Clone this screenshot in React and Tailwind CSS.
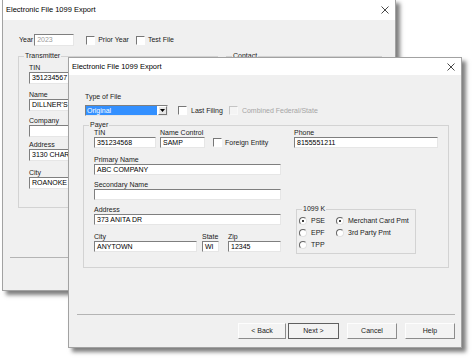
import { useState } from "react"

const BODY = "font-['Liberation_Sans',Arial,sans-serif] text-[7px] leading-[10px] text-[#1b1b1b]"

function CloseX() {
  return (
    <svg width="8" height="8" viewBox="0 0 8 8" className="text-[#333]">
      <path d="M0.5 0.5L7.5 7.5M7.5 0.5L0.5 7.5" stroke="currentColor" strokeWidth="0.9" />
    </svg>
  )
}

function Input({ value = "", className = "", h = "h-[11px]", muted = false }) {
  return (
    <div
      className={`${h} flex items-center overflow-hidden whitespace-nowrap border border-t-[#7f7f7f] border-l-[#7f7f7f] border-r-[#e6e6e6] border-b-[#e6e6e6] bg-white pl-[2px] ${muted ? "text-[#9a9a9a]" : "text-black"} ${className}`}
    >
      {value}
    </div>
  )
}

function Field({ label, value, className = "", h }) {
  return (
    <div className={className}>
      <div className="h-[9px] whitespace-nowrap leading-[9px]">{label}</div>
      <Input value={value} h={h} />
    </div>
  )
}

function Check({ disabled = false }) {
  return (
    <span
      className={`inline-block h-[9px] w-[9px] shrink-0 border ${
        disabled
          ? "border-t-[#c4c4c4] border-l-[#c4c4c4] border-r-[#f8f8f8] border-b-[#f8f8f8] bg-[#f4f4f4]"
          : "border-t-[#777] border-l-[#777] border-r-white border-b-white bg-white"
      }`}
    />
  )
}

function Radio({ checked = false }) {
  return (
    <span className="relative inline-block h-[8px] w-[8px] shrink-0 rounded-full border border-t-[#666] border-l-[#666] border-r-[#e2e2e2] border-b-[#e2e2e2] bg-white">
      {checked && <span className="absolute left-[2px] top-[2px] h-[2px] w-[2px] rounded-full bg-black" />}
    </span>
  )
}

function Group({ label, className = "", children }) {
  return (
    <div className={`relative border border-[#d3d3d3] ${className}`}>
      <span className="absolute left-[5px] top-[-6px] bg-[#f0f0f0] px-[1px] leading-[10px]">{label}</span>
      {children}
    </div>
  )
}

function Btn({ children, primary = false, className = "" }) {
  return (
    <div
      className={`flex h-[16px] items-center justify-center bg-[#f3f3f3] ${
        primary
          ? "border border-[#606060]"
          : "border border-t-[#fdfdfd] border-l-[#fdfdfd] border-r-[#8c8c8c] border-b-[#8c8c8c]"
      } ${className}`}
    >
      {children}
    </div>
  )
}

function TitleBar({ h }) {
  return (
    <div className={`flex ${h} shrink-0 items-center justify-between bg-white pl-[3px] pr-[6px]`}>
      <span className="text-[7.5px] text-black">Electronic File 1099 Export</span>
      <CloseX />
    </div>
  )
}

function BackWindow() {
  return (
    <div className={`absolute left-[2px] top-[-1px] flex h-[292px] w-[394px] flex-col border border-[#a2a2a2] bg-[#f0f0f0] shadow-[4px_4px_4px_rgba(0,0,0,0.5)] ${BODY}`}>
      <TitleBar h="h-[20px]" />
      <div className="flex flex-col pt-[14px]">
        <div className="flex h-[12px] items-center pl-[16px]">
          <span>Year</span>
          <Input value="2023" muted className="ml-[1px] w-[40px]" h="h-[12px]" />
          <span className="ml-[12px] flex"><Check /></span>
          <span className="ml-[3px]">Prior Year</span>
          <span className="ml-[7px] flex"><Check /></span>
          <span className="ml-[3px]">Test File</span>
        </div>
        <div className="ml-[15px] mt-[10px] flex">
          <Group label="Transmitter" className="h-[152px] w-[200px] pl-[10px] pt-[6px]">
            <Field label="TIN" value="351234567" h="h-[12px]" className="w-[120px]" />
            <Field label="Name" value="DILLNER'S" h="h-[12px]" className="mt-[6px] w-[180px]" />
            <Field label="Company" h="h-[12px]" className="mt-[5px] w-[180px]" />
            <Field label="Address" value="3130 CHARLES ST" h="h-[12px]" className="mt-[3px] w-[180px]" />
            <Field label="City" value="ROANOKE" h="h-[12px]" className="mt-[7px] w-[120px]" />
          </Group>
          <Group label="Contact" className="ml-[8px] h-[152px] w-[156px]" />
        </div>
        <div className="ml-[7px] mt-[49px] w-[378px] border-t border-[#b4b4b4]" />
      </div>
    </div>
  )
}

function FrontWindow() {
  const [type] = useState("Original")
  return (
    <div className={`absolute left-[68px] top-[57px] flex h-[291px] w-[394px] flex-col border border-[#a2a2a2] bg-[#f0f0f0] shadow-[4px_4px_4px_rgba(0,0,0,0.5)] ${BODY}`}>
      <TitleBar h="h-[17px]" />
      <div className="flex flex-col pt-[17px]">
        <div className="pl-[16px]">Type of File</div>
        <div className="mt-[3px] flex h-[11px] items-center pl-[16px]">
          <div className="flex h-[11px] w-[83px] border border-t-[#7f7f7f] border-l-[#7f7f7f] border-r-[#e6e6e6] border-b-[#e6e6e6] bg-white">
            <div className="flex flex-1 items-center bg-[#3390ff] pl-[1px] text-white">{type}</div>
            <div className="ml-[1px] flex w-[9px] items-center justify-center border border-t-[#fff] border-l-[#fff] border-r-[#777] border-b-[#777] bg-[#e6e6e6]">
              <svg width="5" height="3" viewBox="0 0 5 3">
                <path d="M0 0H5L2.5 3Z" fill="#000" />
              </svg>
            </div>
          </div>
          <span className="ml-[10px] flex"><Check /></span>
          <span className="ml-[4px]">Last Filing</span>
          <span className="ml-[6px] flex"><Check disabled /></span>
          <span className="ml-[4px] text-[#a5a5a5]">Combined Federal/State</span>
        </div>
        <Group label="Payer" className="ml-[14px] mt-[9px] flex h-[143px] w-[366px] pl-[10px] pt-[2px]">
          <div className="flex w-[187px] flex-col">
            <div className="flex items-end">
              <Field label="TIN" value="351234568" className="w-[62px]" />
              <Field label="Name Control" value="SAMP" className="ml-[4px] w-[45px]" />
              <span className="mb-[1px] ml-[8px] flex"><Check /></span>
              <span className="ml-[3px] whitespace-nowrap">Foreign Entity</span>
            </div>
            <Field label="Primary Name" value="ABC COMPANY" className="mt-[7px]" />
            <Field label="Secondary Name" className="mt-[5px]" />
            <Field label="Address" value="373 ANITA DR" className="mt-[5px]" />
            <div className="mt-[7px] flex">
              <Field label="City" value="ANYTOWN" className="w-[103px]" />
              <Field label="State" value="WI" className="ml-[5px] w-[17px]" />
              <Field label="Zip" value="12345" className="ml-[9px] w-[53px]" />
            </div>
          </div>
          <div className="ml-[13px] flex flex-col">
            <Field label="Phone" value="8155551211" className="w-[144px]" />
            <Group label="1099 K" className="ml-[2px] mt-[61px] h-[45px] w-[120px] pl-[2px] pt-[5px]">
              <div className="grid grid-cols-[37px_1fr]">
                <div className="flex h-[12px] items-center gap-[4px]"><Radio checked />PSE</div>
                <div className="flex h-[12px] items-center gap-[4px] whitespace-nowrap"><Radio checked />Merchant Card Pmt</div>
                <div className="flex h-[12px] items-center gap-[4px]"><Radio />EPF</div>
                <div className="flex h-[12px] items-center gap-[4px] whitespace-nowrap"><Radio />3rd Party Pmt</div>
                <div className="flex h-[12px] items-center gap-[4px]"><Radio />TPP</div>
              </div>
            </Group>
          </div>
        </Group>
        <div className="ml-[8px] mt-[46px] w-[378px] border-t border-[#b4b4b4]" />
        <div className="mt-[8px] flex justify-end pr-[6px]">
          <Btn className="w-[48px]">&lt; Back</Btn>
          <Btn primary className="ml-[2px] w-[51px]">Next &gt;</Btn>
          <Btn className="ml-[8px] w-[50px]">Cancel</Btn>
          <Btn className="ml-[8px] w-[50px]">Help</Btn>
        </div>
      </div>
    </div>
  )
}

export default function App() {
  return (
    <div className="relative h-[358px] w-[474px] overflow-hidden bg-white">
      <BackWindow />
      <FrontWindow />
    </div>
  )
}
